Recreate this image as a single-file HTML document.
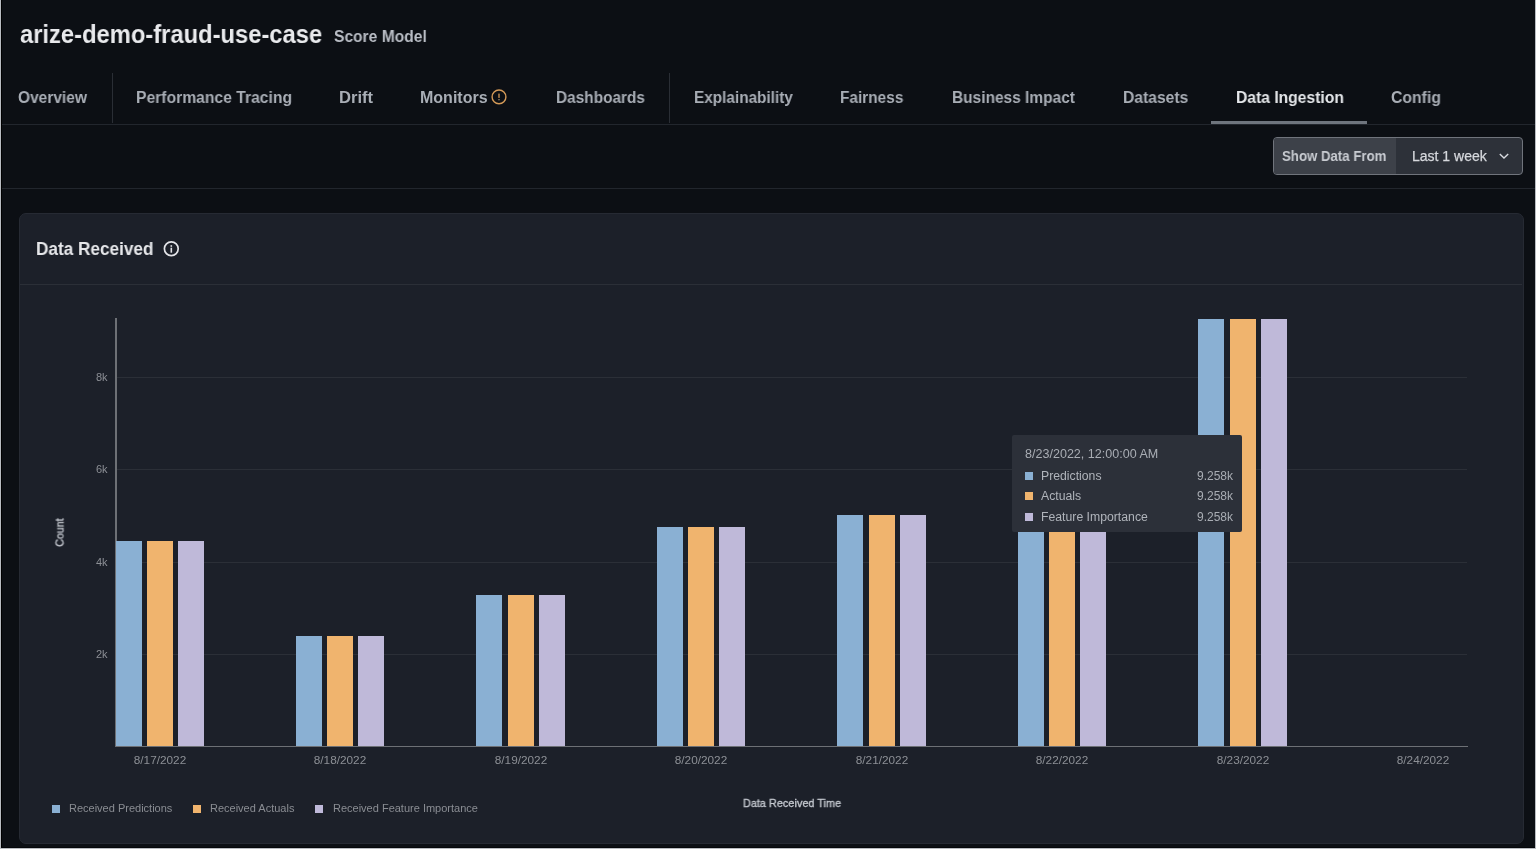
<!DOCTYPE html>
<html><head><meta charset="utf-8"><title>Data Ingestion</title>
<style>
html,body{margin:0;padding:0;}
body{width:1536px;height:849px;background:#0c0f14;position:relative;overflow:hidden;font-family:"Liberation Sans",sans-serif;}
.t{position:absolute;line-height:1;white-space:nowrap;will-change:transform;}
.r{position:absolute;}
</style></head><body>
<div class="r" style="left:0.00px;top:0.00px;width:1.00px;height:849.00px;background:#b9bcc1;"></div>
<div class="r" style="left:1.00px;top:0.00px;width:1.00px;height:849.00px;background:#000000;"></div>
<div class="r" style="left:1535.00px;top:0.00px;width:1.00px;height:849.00px;background:#b9bcc1;"></div>
<div class="r" style="left:0.00px;top:848.00px;width:1536.00px;height:1.00px;background:#b9bcc1;"></div>
<div class="r" style="left:1.00px;top:847.00px;width:1534.00px;height:1.00px;background:#05070a;"></div>
<div class="t" style="left:19.50px;top:20.99px;font-size:26px;color:#e9eaed;font-weight:bold;transform:scaleX(0.913);transform-origin:0 0;">arize-demo-fraud-use-case</div>
<div class="t" style="left:334.00px;top:29.46px;font-size:16px;color:#babec6;font-weight:bold;transform:scaleX(0.975);transform-origin:0 0;">Score Model</div>
<div class="t" style="left:18.33px;top:89.66px;font-size:16px;color:#a9aeb6;font-weight:bold;transform:scaleX(0.9688);transform-origin:0 0;">Overview</div>
<div class="t" style="left:136.02px;top:89.66px;font-size:16px;color:#a9aeb6;font-weight:bold;transform:scaleX(0.9798);transform-origin:0 0;">Performance Tracing</div>
<div class="t" style="left:339.36px;top:89.66px;font-size:16px;color:#a9aeb6;font-weight:bold;transform:scaleX(1.0359);transform-origin:0 0;">Drift</div>
<div class="t" style="left:420.41px;top:89.66px;font-size:16px;color:#a9aeb6;font-weight:bold;transform:scaleX(0.9932);transform-origin:0 0;">Monitors</div>
<div class="t" style="left:555.84px;top:89.66px;font-size:16px;color:#a9aeb6;font-weight:bold;transform:scaleX(0.9617);transform-origin:0 0;">Dashboards</div>
<div class="t" style="left:693.74px;top:89.66px;font-size:16px;color:#a9aeb6;font-weight:bold;transform:scaleX(0.9581);transform-origin:0 0;">Explainability</div>
<div class="t" style="left:840.04px;top:89.66px;font-size:16px;color:#a9aeb6;font-weight:bold;transform:scaleX(0.9622);transform-origin:0 0;">Fairness</div>
<div class="t" style="left:951.83px;top:89.66px;font-size:16px;color:#a9aeb6;font-weight:bold;transform:scaleX(0.9668);transform-origin:0 0;">Business Impact</div>
<div class="t" style="left:1122.72px;top:89.66px;font-size:16px;color:#a9aeb6;font-weight:bold;transform:scaleX(0.9783);transform-origin:0 0;">Datasets</div>
<div class="t" style="left:1235.52px;top:89.66px;font-size:16px;color:#e6e8eb;font-weight:bold;transform:scaleX(0.9784);transform-origin:0 0;">Data Ingestion</div>
<div class="t" style="left:1390.82px;top:89.66px;font-size:16px;color:#a9aeb6;font-weight:bold;transform:scaleX(0.9845);transform-origin:0 0;">Config</div>
<svg class="r" style="left:490px;top:88px" width="18" height="18" viewBox="0 0 18 18"><circle cx="9" cy="8.9" r="6.9" fill="none" stroke="#d49a58" stroke-width="1.4"/><rect x="8.35" y="5.6" width="1.3" height="4.3" fill="#d49a58"/><rect x="8.35" y="11" width="1.3" height="1.3" fill="#9a8a70"/></svg>
<div class="r" style="left:112.00px;top:73.00px;width:1.00px;height:50.00px;background:#2a2e35;"></div>
<div class="r" style="left:669.00px;top:73.00px;width:1.00px;height:50.00px;background:#2a2e35;"></div>
<div class="r" style="left:2.00px;top:124.00px;width:1533.00px;height:1.00px;background:#22262d;"></div>
<div class="r" style="left:1211.40px;top:121.00px;width:156.00px;height:3.00px;background:#6f757e;"></div>
<div class="r" style="left:2.00px;top:187.50px;width:1533.00px;height:1.00px;background:#22262d;"></div>
<div class="r" style="left:1273px;top:137px;width:248px;height:36px;border:1px solid #70747c;border-radius:4px;background:#2d3139;overflow:hidden;"><div style="position:absolute;left:0;top:0;width:122px;height:37px;background:#3d4149;"></div></div>
<div class="t" style="left:1282.30px;top:148.55px;font-size:14px;color:#c9ccd2;font-weight:bold;transform:scaleX(0.945);transform-origin:0 0;">Show Data From</div>
<div class="t" style="left:1411.50px;top:148.55px;font-size:14px;color:#d6d8dd;font-weight:normal;-webkit-text-stroke:0.25px #d6d8dd;">Last 1 week</div>
<svg class="r" style="left:1497px;top:152px" width="14" height="8" viewBox="0 0 14 8"><path d="M2.8 2 L7 6 L11.2 2" fill="none" stroke="#d9dbe0" stroke-width="1.4"/></svg>
<div class="r" style="left:19px;top:213px;width:1503px;height:629px;background:#1c2029;border:1px solid #262a33;border-radius:7px;"></div>
<div class="r" style="left:20.00px;top:284.00px;width:1502.00px;height:1.00px;background:#2b2f37;"></div>
<div class="t" style="left:36.30px;top:239.76px;font-size:18px;color:#e6e7ea;font-weight:bold;transform:scaleX(0.955);transform-origin:0 0;">Data Received</div>
<svg class="r" style="left:162px;top:240px" width="18" height="18" viewBox="0 0 18 18"><circle cx="9.3" cy="8.8" r="6.9" fill="none" stroke="#e3e4e8" stroke-width="1.7"/><rect x="8.5" y="7.7" width="1.6" height="5.0" fill="#e3e4e8"/><rect x="8.5" y="5.2" width="1.6" height="1.6" fill="#e3e4e8"/></svg>
<div class="r" style="left:116.00px;top:654.10px;width:1351.00px;height:1.20px;background:#2b2f37;"></div>
<div class="t" style="left:60px;top:649.19px;width:47.5px;text-align:right;font-size:11px;color:#8c8f95;">2k</div>
<div class="r" style="left:116.00px;top:561.70px;width:1351.00px;height:1.20px;background:#2b2f37;"></div>
<div class="t" style="left:60px;top:556.79px;width:47.5px;text-align:right;font-size:11px;color:#8c8f95;">4k</div>
<div class="r" style="left:116.00px;top:469.30px;width:1351.00px;height:1.20px;background:#2b2f37;"></div>
<div class="t" style="left:60px;top:464.39px;width:47.5px;text-align:right;font-size:11px;color:#8c8f95;">6k</div>
<div class="r" style="left:116.00px;top:376.90px;width:1351.00px;height:1.20px;background:#2b2f37;"></div>
<div class="t" style="left:60px;top:371.99px;width:47.5px;text-align:right;font-size:11px;color:#8c8f95;">8k</div>
<div class="r" style="left:115.30px;top:318.00px;width:1.50px;height:428.30px;background:#6d7075;"></div>
<div class="r" style="left:115.50px;top:541.17px;width:26.00px;height:205.13px;background:#8ab0d3;"></div>
<div class="r" style="left:147.00px;top:541.17px;width:26.00px;height:205.13px;background:#f0b46e;"></div>
<div class="r" style="left:178.00px;top:541.17px;width:26.00px;height:205.13px;background:#bfb9d9;"></div>
<div class="r" style="left:295.95px;top:636.34px;width:26.00px;height:109.96px;background:#8ab0d3;"></div>
<div class="r" style="left:327.45px;top:636.34px;width:26.00px;height:109.96px;background:#f0b46e;"></div>
<div class="r" style="left:358.45px;top:636.34px;width:26.00px;height:109.96px;background:#bfb9d9;"></div>
<div class="r" style="left:476.40px;top:594.76px;width:26.00px;height:151.54px;background:#8ab0d3;"></div>
<div class="r" style="left:507.90px;top:594.76px;width:26.00px;height:151.54px;background:#f0b46e;"></div>
<div class="r" style="left:538.90px;top:594.76px;width:26.00px;height:151.54px;background:#bfb9d9;"></div>
<div class="r" style="left:656.85px;top:526.85px;width:26.00px;height:219.45px;background:#8ab0d3;"></div>
<div class="r" style="left:688.35px;top:526.85px;width:26.00px;height:219.45px;background:#f0b46e;"></div>
<div class="r" style="left:719.35px;top:526.85px;width:26.00px;height:219.45px;background:#bfb9d9;"></div>
<div class="r" style="left:837.30px;top:515.30px;width:26.00px;height:231.00px;background:#8ab0d3;"></div>
<div class="r" style="left:868.80px;top:515.30px;width:26.00px;height:231.00px;background:#f0b46e;"></div>
<div class="r" style="left:899.80px;top:515.30px;width:26.00px;height:231.00px;background:#bfb9d9;"></div>
<div class="r" style="left:1017.75px;top:519.92px;width:26.00px;height:226.38px;background:#8ab0d3;"></div>
<div class="r" style="left:1049.25px;top:519.92px;width:26.00px;height:226.38px;background:#f0b46e;"></div>
<div class="r" style="left:1080.25px;top:519.92px;width:26.00px;height:226.38px;background:#bfb9d9;"></div>
<div class="r" style="left:1198.20px;top:318.58px;width:26.00px;height:427.72px;background:#8ab0d3;"></div>
<div class="r" style="left:1229.70px;top:318.58px;width:26.00px;height:427.72px;background:#f0b46e;"></div>
<div class="r" style="left:1260.70px;top:318.58px;width:26.00px;height:427.72px;background:#bfb9d9;"></div>
<div class="r" style="left:115.30px;top:745.50px;width:1352.40px;height:1.50px;background:#6d7075;"></div>
<div class="t" style="left:-40.00px;top:754.81px;width:400px;text-align:center;font-size:11.8px;color:#8c8f95;font-weight:normal;">8/17/2022</div>
<div class="t" style="left:140.45px;top:754.81px;width:400px;text-align:center;font-size:11.8px;color:#8c8f95;font-weight:normal;">8/18/2022</div>
<div class="t" style="left:320.90px;top:754.81px;width:400px;text-align:center;font-size:11.8px;color:#8c8f95;font-weight:normal;">8/19/2022</div>
<div class="t" style="left:501.35px;top:754.81px;width:400px;text-align:center;font-size:11.8px;color:#8c8f95;font-weight:normal;">8/20/2022</div>
<div class="t" style="left:681.80px;top:754.81px;width:400px;text-align:center;font-size:11.8px;color:#8c8f95;font-weight:normal;">8/21/2022</div>
<div class="t" style="left:862.25px;top:754.81px;width:400px;text-align:center;font-size:11.8px;color:#8c8f95;font-weight:normal;">8/22/2022</div>
<div class="t" style="left:1042.70px;top:754.81px;width:400px;text-align:center;font-size:11.8px;color:#8c8f95;font-weight:normal;">8/23/2022</div>
<div class="t" style="left:1223.15px;top:754.81px;width:400px;text-align:center;font-size:11.8px;color:#8c8f95;font-weight:normal;">8/24/2022</div>
<div class="t" style="left:591.80px;top:797.69px;width:400px;text-align:center;font-size:11px;color:#c8ccd3;font-weight:normal;transform:scaleX(0.99);-webkit-text-stroke:0.3px #c8ccd3;">Data Received Time</div>
<div class="t" style="left:9.600000000000001px;top:527.2px;width:100px;text-align:center;font-size:11px;color:#c8ccd3;-webkit-text-stroke:0.3px #c8ccd3;transform:rotate(-90deg) scaleX(0.97);">Count</div>
<div class="r" style="left:51.70px;top:804.60px;width:8.20px;height:8.20px;background:#8ab0d3;"></div>
<div class="t" style="left:69.00px;top:803.49px;font-size:11px;color:#8a8d93;font-weight:normal;">Received Predictions</div>
<div class="r" style="left:193.00px;top:804.60px;width:8.20px;height:8.20px;background:#f0b46e;"></div>
<div class="t" style="left:210.00px;top:803.49px;font-size:11px;color:#8a8d93;font-weight:normal;">Received Actuals</div>
<div class="r" style="left:315.30px;top:804.60px;width:8.20px;height:8.20px;background:#bfb9d9;"></div>
<div class="t" style="left:332.90px;top:803.49px;font-size:11px;color:#8a8d93;font-weight:normal;">Received Feature Importance</div>
<div class="r" style="left:1012.4px;top:435.2px;width:230px;height:96.5px;background:#2c3039;border-radius:2px;"></div>
<div class="t" style="left:1024.60px;top:447.97px;font-size:12.2px;color:#a9adb4;font-weight:normal;transform:scaleX(1.03);transform-origin:0 0;">8/23/2022, 12:00:00 AM</div>
<div class="r" style="left:1025.20px;top:471.60px;width:8.00px;height:8.00px;background:#8ab0d3;"></div>
<div class="t" style="left:1040.80px;top:469.74px;font-size:12px;color:#b0b4bb;font-weight:normal;transform:scaleX(1.02);transform-origin:0 0;">Predictions</div>
<div class="t" style="left:1132.6px;top:469.74px;width:100px;text-align:right;font-size:12px;color:#a9adb4;">9.258k</div>
<div class="r" style="left:1025.20px;top:492.10px;width:8.00px;height:8.00px;background:#f0b46e;"></div>
<div class="t" style="left:1040.80px;top:490.24px;font-size:12px;color:#b0b4bb;font-weight:normal;transform:scaleX(1.02);transform-origin:0 0;">Actuals</div>
<div class="t" style="left:1132.6px;top:490.24px;width:100px;text-align:right;font-size:12px;color:#a9adb4;">9.258k</div>
<div class="r" style="left:1025.20px;top:512.60px;width:8.00px;height:8.00px;background:#bfb9d9;"></div>
<div class="t" style="left:1040.80px;top:510.74px;font-size:12px;color:#b0b4bb;font-weight:normal;transform:scaleX(1.02);transform-origin:0 0;">Feature Importance</div>
<div class="t" style="left:1132.6px;top:510.74px;width:100px;text-align:right;font-size:12px;color:#a9adb4;">9.258k</div>
</body></html>
